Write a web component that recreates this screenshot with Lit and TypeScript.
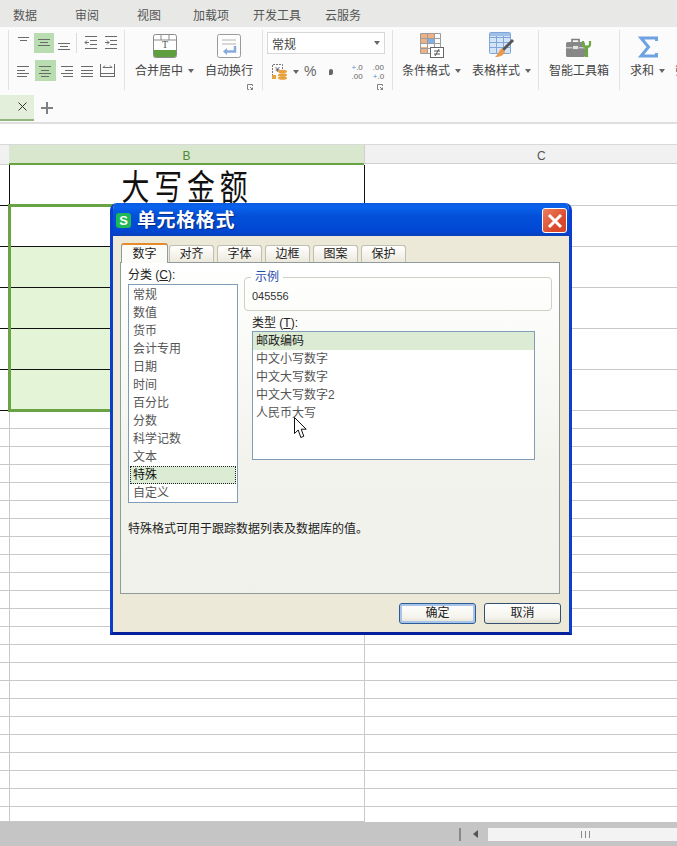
import { css, html, svg, LitElement } from "lit";
import { customElement } from "lit/decorators.js";
import { classMap } from "lit/directives/class-map.js";

type Seg = [number, number, number];

// simple "lines" icon used by the alignment buttons, 20x20
const lines = (segs: Seg[], extra: unknown = null) => html`<svg
  width="20"
  height="20"
  viewBox="0 0 20 20"
  fill="none"
  stroke="#6a6a6a"
  stroke-width="1"
>
  ${segs.map(([a, b, y]) => svg`<path d="M${a} ${y}H${b}" />`)} ${extra}
</svg>`;

const mergeIcon = html`<svg width="24" height="24" viewBox="0 0 24 24">
  <rect x=".5" y=".5" width="23" height="23" rx="2" fill="#fff" stroke="#8b8b8b" />
  <path d="M1 6H23M8 1V6M16 1V6" stroke="#8b8b8b" fill="none" />
  <path d="M1 16H23V21.5Q23 23 21.5 23H2.5Q1 23 1 21.5Z" fill="#5f9f40" />
  <text x="12" y="14" font-size="10" text-anchor="middle" fill="#555" font-family="Liberation Serif">T</text>
</svg>`;

const wrapIcon = html`<svg width="24" height="24" viewBox="0 0 24 24" fill="none">
  <rect x=".5" y=".5" width="23" height="23" rx="2" fill="#fdfdfd" stroke="#9a9a9a" />
  <path d="M5 6H19M5 10H19" stroke="#b4b4b4" />
  <path d="M18 12V17.5H9" stroke="#86a9de" stroke-width="2.4" />
  <path d="M10 14V21L6 17.5Z" fill="#86a9de" />
</svg>`;

const condIcon = html`<svg width="24" height="25" viewBox="0 0 24 25" fill="none">
  <rect x="7" y="1" width="7" height="5" fill="#eeb184" />
  <rect x="1" y="1" width="6" height="9" fill="#eeb184" />
  <rect x="7" y="6" width="8" height="5" fill="#7fb0e6" />
  <rect x="1" y="14" width="6" height="6" fill="#eeb184" />
  <path d="M.5 .5H20.5V14M.5 .5V20.5H10M7.5 1V20M14.5 1V14M1 5.5H20M1 10.5H20M1 15.5H10" stroke="#9c9c9c" />
  <rect x="10.5" y="14.5" width="13" height="10" fill="#fff" stroke="#666" />
  <path d="M14 18H20M14 21H20M19 16L15 23" stroke="#555" />
</svg>`;

const tableIcon = html`<svg width="26" height="26" viewBox="0 0 26 26" fill="none">
  <rect x=".5" y=".5" width="21" height="21" rx="1" fill="#d4e4f7" stroke="#7fa6d6" />
  <path d="M1 5.5H21M1 10.5H21M1 15.5H21M7.5 1V21M14.5 1V21" stroke="#7fa6d6" />
  <path d="M1 1H21V4H1Z" fill="#9fbfe6" />
  <path d="M24 8L13 19" stroke="#555" stroke-width="3" />
  <path d="M13 16L16 20C15 23 11 25 6 25C9 23 10 18 13 16Z" fill="#ea9a50" />
</svg>`;

const toolIcon = html`<svg width="26" height="20" viewBox="0 0 26 20" fill="none">
  <path d="M6 4V1.5H13V4" stroke="#7d7d7d" stroke-width="1.6" />
  <rect x="0" y="4" width="19" height="15" rx="1.5" fill="#878787" />
  <rect x="0" y="9" width="19" height="1.4" fill="#c9c9c9" />
  <rect x="6.5" y="7.5" width="6" height="4" fill="#e3e3e3" stroke="#777" stroke-width=".6" />
  <path d="M20.5 7.5V19" stroke="#6aa842" stroke-width="3.2" />
  <path d="M17 3V6.5Q17 9 20.5 9Q24 9 24 6.5V3" stroke="#6aa842" stroke-width="2.2" />
</svg>`;

const sigmaIcon = html`<svg width="20" height="22" viewBox="0 0 20 22" fill="none">
  <path d="M18.5 5V2H3L10.5 11L3 20H18.5V17" stroke="#6fa2e2" stroke-width="3" />
</svg>`;

const coinIcon = html`<svg width="17" height="17" viewBox="0 0 17 17" fill="none">
  <path d="M1.5 13V1.5H11.5V6" stroke="#777" stroke-dasharray="2 1" />
  <text x="6.5" y="9" font-size="8" text-anchor="middle" fill="#555" font-family="Liberation Sans">¥</text>
  <rect x="1" y="12" width="4" height="4" fill="#e9a13b" />
  <ellipse cx="11.5" cy="8.5" rx="4.5" ry="1.8" fill="#e9a13b" />
  <ellipse cx="11.5" cy="12" rx="4.5" ry="1.8" fill="#e9a13b" />
  <ellipse cx="11.5" cy="15" rx="4.5" ry="1.8" fill="#e9a13b" />
</svg>`;

const launcher = html`<svg class="launcher" width="6" height="6" viewBox="0 0 6 6" fill="none">
  <path d="M5.5 2V.5H.5V5.5H2M3 3L5.5 5.5M5.5 3.5V5.5H3.5" stroke="#808080" />
</svg>`;

const TOP_TABS = ["数据", "审阅", "视图", "加载项", "开发工具", "云服务"];
const CATEGORIES = [
  "常规",
  "数值",
  "货币",
  "会计专用",
  "日期",
  "时间",
  "百分比",
  "分数",
  "科学记数",
  "文本",
  "特殊",
  "自定义",
];
const TYPES = ["邮政编码", "中文小写数字", "中文大写数字", "中文大写数字2", "人民币大写"];
const DIALOG_TABS = ["数字", "对齐", "字体", "边框", "图案", "保护"];

// tall rows first, then the default height ones, the last is cut by the status bar
const ROW_HEIGHTS = [41, 41, 41, 41, 41, 41, ...Array(22).fill(18), 15];

@customElement("app-root")
class AppRoot extends LitElement {
  private bigButton(label: string, icon: unknown, caret = true) {
    return html`<div class="big">
      <div class="big-icon">${icon}</div>
      <div class="big-label">${label}${caret ? html`<i class="caret"></i>` : null}</div>
    </div>`;
  }

  private renderRibbon() {
    return html`<div class="ribbon">
      <div class="group g0"></div>
      <div class="group g1">
        <div class="icon-row">
          <span class="cell">${lines([[5, 16, 4.5], [7, 14, 7.5]])}</span>
          <span class="cell on top-on">${lines([[4, 16, 6.5], [6, 14, 9.5], [4, 16, 12.5]])}</span>
          <span class="cell">${lines([[4, 16, 10.5], [6, 14, 13.5], [4, 16, 16.5]])}</span>
          <span class="inner-sep"></span>
          <span class="cell">${lines(
            [[5, 17, 3.5], [10, 17, 7.5], [10, 17, 11.5], [5, 17, 15.5]],
            svg`<path d="M9 9.5H5M7 7.5L5 9.5L7 11.5" />`
          )}</span>
          <span class="cell">${lines(
            [[5, 17, 3.5], [10, 17, 7.5], [10, 17, 11.5], [5, 17, 15.5]],
            svg`<path d="M5 9.5H9M7 7.5L9 9.5L7 11.5" />`
          )}</span>
        </div>
        <div class="icon-row low">
          <span class="cell">${lines([[4, 16, 6.5], [4, 12, 10.5], [4, 16, 13.5], [4, 14, 16.5]])}</span>
          <span class="cell on wide">${lines([[4, 16, 6.5], [6, 14, 10.5], [4, 16, 13.5], [6, 14, 16.5]])}</span>
          <span class="cell">${lines([[4, 16, 6.5], [8, 16, 10.5], [4, 16, 13.5], [6, 16, 16.5]])}</span>
          <span class="cell">${lines([[4, 16, 6.5], [4, 16, 10.5], [4, 16, 13.5], [4, 16, 16.5]])}</span>
          <span class="cell">${lines(
            [[3, 18, 16.5], [3, 18, 13.5]],
            svg`<path d="M3.5 4V17M17.5 4V17M6 7.5H15M6 7.5L8 5.5M15 7.5L13 5.5" />`
          )}</span>
        </div>
      </div>
      <div class="group g2">
        ${this.bigButton("合并居中", mergeIcon)} ${this.bigButton("自动换行", wrapIcon, false)}
        ${launcher}
      </div>
      <div class="group g3">
        <div class="select">常规<i class="caret"></i></div>
        <div class="num-row">
          ${coinIcon}<i class="caret"></i>
          <span class="pct">%</span>
          <span class="comma"></span>
          <div class="dec first"><div><b>+</b>.0</div><div>.00</div></div>
          <div class="dec"><div>.00</div><div><b>+</b>.0</div></div>
        </div>
        ${launcher}
      </div>
      <div class="group g4">
        ${this.bigButton("条件格式", condIcon)} ${this.bigButton("表格样式", tableIcon)}
      </div>
      <div class="group g5">${this.bigButton("智能工具箱", toolIcon, false)}</div>
      <div class="group g6">
        ${this.bigButton("求和", sigmaIcon)} ${this.bigButton("筛选", null, false)}
      </div>
    </div>`;
  }

  private renderSheet() {
    return html`<div class="col-head">
        <div class="head-a"></div>
        <div class="head-b">B</div>
        <div class="head-c">C</div>
      </div>
      <div class="sheet">
        ${ROW_HEIGHTS.map(
          (h, i) => html`<div class="row" style="height:${h}px">
            <div class=${classMap({ a: true, inked: i < 6, first: i === 0 })}></div>
            <div
              class=${classMap({
                b: true,
                inked: i < 6,
                first: i === 0,
                filled: i > 1 && i < 6,
              })}
            >
              ${i === 0 ? html`<span class="big-title">大写金额</span>` : null}
            </div>
            <div class=${classMap({ c: true, cut: i === ROW_HEIGHTS.length - 1 })}></div>
          </div>`
        )}
        <div class="selection"></div>
      </div>`;
  }

  private renderDialog() {
    return html`<div class="dialog">
      <div class="titlebar">
        <span class="logo">S</span>
        <span class="title">单元格格式</span>
        <span class="close">
          <svg width="16" height="16" viewBox="0 0 16 16" fill="none">
            <path d="M2 2L14 14M14 2L2 14" stroke="#fff" stroke-width="3" />
          </svg>
        </span>
      </div>
      <div class="dlg-body">
        <div class="dlg-tabs">
          ${DIALOG_TABS.map(
            (t, i) => html`<div class=${classMap({ "dlg-tab": true, active: i === 0 })}>${t}</div>`
          )}
        </div>
        <div class="panel">
          <div class="panel-cols">
            <div class="left">
              <div class="label">分类 (<u>C</u>):</div>
              <div class="list cat-list">
                ${CATEGORIES.map(
                  (c) => html`<div class=${classMap({ item: true, focused: c === "特殊" })}>${c}</div>`
                )}
              </div>
            </div>
            <div class="right">
              <div class="sample">
                <span class="legend">示例</span>
                <span class="sample-value">045556</span>
              </div>
              <div class="type-wrap">
                <div class="label type-label">类型 (<u>T</u>):</div>
                <div class="list type-list">
                  ${TYPES.map(
                    (t, i) => html`<div class=${classMap({ item: true, picked: i === 0 })}>${t}</div>`
                  )}
                </div>
              </div>
            </div>
          </div>
          <div class="desc">特殊格式可用于跟踪数据列表及数据库的值。</div>
        </div>
        <div class="dlg-actions">
          <div class="btn default">确定</div>
          <div class="btn">取消</div>
        </div>
      </div>
    </div>`;
  }

  protected render() {
    return html`
      <div class="top-tabs">${TOP_TABS.map((t) => html`<span>${t}</span>`)}</div>
      ${this.renderRibbon()}
      <div class="doc-strip">
        <div class="doc-tab">
          <svg width="9" height="9" viewBox="0 0 9 9"><path d="M.5 .5L8.5 8.5M8.5 .5L.5 8.5" stroke="#333" /></svg>
        </div>
        <svg width="14" height="14" viewBox="0 0 14 14"><path d="M7 1V13M1 7H13" stroke="#808080" stroke-width="2" /></svg>
      </div>
      <div class="formula"></div>
      ${this.renderSheet()}
      <div class="status">
        <i class="st-sep"></i>
        <i class="st-arrow"></i>
        <div class="st-track"><i class="st-grip"></i></div>
      </div>
      ${this.renderDialog()}
      <svg class="pointer" width="13" height="22" viewBox="0 0 13 22">
        <path d="M.5 .5V16.5L4.2 13L6.8 20.5L9.8 19.3L7.2 12.2H12.2Z" fill="#fff" stroke="#111" />
      </svg>
    `;
  }

  static styles = css`
    :host {
      display: flex;
      flex-direction: column;
      position: relative;
      width: 677px;
      height: 846px;
      overflow: hidden;
      background: #fff;
      font-family: "Liberation Sans", "Noto Sans CJK SC", sans-serif;
      font-size: 12px;
      color: #444;
    }

    .top-tabs {
      display: grid;
      grid-template-columns: 62px 62px 56px 60px 72px auto;
      align-items: center;
      box-sizing: border-box;
      height: 27px;
      flex: none;
      padding: 2px 0 0 13px;
      background: #e8e9e7;
      color: #555;
    }

    .ribbon {
      display: flex;
      height: 67px;
      flex: none;
      overflow: hidden;
      background: #fbfbfb;
    }
    .group {
      display: flex;
      position: relative;
      flex: none;
      box-sizing: border-box;
      margin: 3px 0 4px;
      border-right: 1px solid #e2e2e2;
    }
    .g0 {
      width: 9px;
    }
    .g1 {
      flex-direction: column;
      width: 116px;
      padding: 3px 0 0 4px;
      gap: 7px;
    }
    .g2 {
      width: 138px;
      padding-left: 10px;
      gap: 11px;
    }
    .g3 {
      flex-direction: column;
      width: 130px;
      padding: 2px 0 0 4px;
    }
    .g4 {
      width: 146px;
      padding-left: 9px;
      gap: 11px;
    }
    .g5 {
      width: 81px;
      padding-left: 10px;
    }
    .g6 {
      width: 70px;
      padding-left: 10px;
      gap: 10px;
      border-right: 0;
    }
    .icon-row {
      display: flex;
      height: 20px;
    }
    .icon-row.low {
      height: 21px;
    }
    .cell {
      display: block;
      width: 20px;
      height: 20px;
      flex: none;
    }
    .cell.on {
      background: #b9dcb0;
    }
    .cell.top-on {
      margin-left: 1px;
    }
    .cell.wide {
      width: 21px;
      height: 21px;
      margin: 0 1px 0 2px;
    }
    .inner-sep {
      width: 1px;
      height: 20px;
      margin: 0 3px 0 2px;
      background: #dcdcdc;
    }
    .big {
      display: flex;
      flex-direction: column;
      align-items: center;
      flex: none;
    }
    .big-icon {
      display: flex;
      align-items: flex-end;
      justify-content: center;
      height: 28px;
    }
    .big-label {
      display: flex;
      align-items: center;
      margin-top: 6px;
      line-height: 14px;
      white-space: nowrap;
    }
    .caret {
      display: inline-block;
      width: 0;
      height: 0;
      margin-left: 5px;
      border: 3px solid transparent;
      border-top: 4px solid #666;
      border-bottom: 0;
    }
    .launcher {
      position: absolute;
      right: 9px;
      top: 54px;
    }
    .select {
      display: flex;
      align-items: center;
      justify-content: space-between;
      box-sizing: border-box;
      width: 118px;
      height: 22px;
      padding: 0 4px;
      border: 1px solid #d8d8d8;
      background: #fff;
    }
    .num-row {
      display: flex;
      align-items: center;
      height: 17px;
      margin: 9px 0 0 4px;
    }
    .pct {
      margin-left: 5px;
      font-size: 14px;
      line-height: 17px;
      color: #666;
    }
    .comma {
      width: 4px;
      height: 6px;
      margin: 0 0 0 13px;
      border-radius: 2px 2px 2px 0;
      background: #666;
    }
    .dec {
      display: flex;
      flex-direction: column;
      gap: 0;
      margin-left: 10px;
      font-size: 8px;
      color: #666;
    }
    .dec.first {
      margin-left: 18px;
    }
    .dec div {
      height: 9px;
      line-height: 9px;
      white-space: nowrap;
    }
    .dec b {
      font-weight: 400;
      color: #5b8fd6;
    }

    .doc-strip {
      display: flex;
      align-items: center;
      gap: 6px;
      box-sizing: border-box;
      height: 30px;
      flex: none;
      padding-bottom: 1px;
      background: #fbfbfb;
      border-bottom: 2px solid #dfdfdf;
    }
    .doc-tab {
      display: flex;
      align-items: center;
      justify-content: flex-end;
      box-sizing: border-box;
      width: 34px;
      height: 26px;
      padding: 0 7px 0 0;
      background: #e3efda;
      border-bottom: 2px solid #8fb87a;
    }
    .formula {
      height: 21px;
      flex: none;
      box-sizing: border-box;
      background: #fff;
      border-bottom: 1px solid #d9d9d9;
    }

    .col-head {
      display: flex;
      height: 20px;
      flex: none;
      line-height: 23px;
      text-align: center;
    }
    .head-a {
      width: 9px;
      background: #f1f1f1;
      border-bottom: 1px solid #cfcfcf;
    }
    .head-b {
      width: 355px;
      box-sizing: border-box;
      color: #4f8a2f;
      background: #d8e7ce;
      border-bottom: 2px solid #6aa343;
    }
    .head-c {
      flex: 1;
      box-sizing: border-box;
      height: 19px;
      padding-left: 172px;
      text-align: left;
      color: #555;
      background: #f1f1f1;
      border-bottom: 1px solid #cfcfcf;
      border-left: 1px solid #cfcfcf;
    }

    .sheet {
      position: relative;
      flex: 1;
      overflow: hidden;
      background: #fff;
    }
    .row {
      display: flex;
      box-sizing: border-box;
    }
    .a,
    .b,
    .c {
      box-sizing: border-box;
      border-bottom: 1px solid #c9c9c9;
    }
    .a {
      width: 10px;
      border-right: 1px solid #c9c9c9;
    }
    .b {
      display: flex;
      justify-content: center;
      width: 355px;
      border-right: 1px solid #c9c9c9;
    }
    .c {
      flex: 1;
    }
    .c.cut {
      border-bottom: 0;
    }
    .inked {
      border-bottom-color: #111;
    }
    .first {
      border-right-color: #111;
    }
    .filled {
      background: #e3f5d6;
    }
    .big-title {
      display: inline-block;
      font-size: 34px;
      line-height: 44px;
      height: 40px;
      letter-spacing: 6px;
      color: #111;
      transform: scale(0.82, 1.05);
    }
    .selection {
      position: absolute;
      left: 8px;
      top: 39px;
      box-sizing: border-box;
      width: 358px;
      height: 208px;
      border: 3px solid #6aa343;
    }

    .status {
      display: flex;
      align-items: center;
      height: 24px;
      flex: none;
      padding-left: 459px;
      background: #c5c5c5;
    }
    .st-sep {
      width: 2px;
      height: 13px;
      background: #8a8a8a;
    }
    .st-arrow {
      width: 0;
      height: 0;
      margin: 0 10px 0 12px;
      border: 4px solid transparent;
      border-right: 5px solid #555;
      border-left: 0;
    }
    .st-track {
      display: flex;
      align-items: center;
      flex: 1;
      height: 13px;
      padding-left: 93px;
      background: #f3f3f3;
    }
    .st-grip {
      width: 9px;
      height: 7px;
      background: repeating-linear-gradient(90deg, #8a8a8a 0 1px, transparent 1px 4px);
    }

    .dialog {
      position: absolute;
      left: 110px;
      top: 203px;
      box-sizing: border-box;
      width: 462px;
      height: 432px;
      overflow: hidden;
      background: #ece9d8;
      border: 3px solid #0b3fcb;
      border-top: 0;
      border-bottom-color: #04219b;
      border-radius: 7px 7px 0 0;
    }
    .titlebar {
      display: flex;
      align-items: center;
      box-sizing: border-box;
      height: 33px;
      margin: 0 -3px;
      padding: 2px 5px 0 6px;
      background: linear-gradient(#0a5ae2 0, #0a62ec 12%, #0350d8 40%, #0047d4 85%, #0a3fb8 100%);
    }
    .logo {
      width: 15px;
      height: 15px;
      border-radius: 3px;
      text-align: center;
      font-size: 13px;
      font-weight: 700;
      line-height: 15px;
      color: #fff;
      background: #1db954;
    }
    .title {
      flex: 1;
      margin-left: 6px;
      font-size: 19px;
      font-weight: 700;
      line-height: 24px;
      letter-spacing: 0.6px;
      color: #fff;
      text-shadow: 1px 1px 1px #0a2a80;
    }
    .close {
      display: flex;
      align-items: center;
      justify-content: center;
      box-sizing: border-box;
      width: 25px;
      height: 25px;
      border: 1px solid #fff;
      border-radius: 3px;
      background: linear-gradient(135deg, #ec7d5c, #d9482a 70%);
    }
    .dlg-body {
      display: flex;
      flex-direction: column;
      height: 396px;
      box-sizing: border-box;
      padding: 7px 8px 8px 7px;
    }
    .dlg-tabs {
      display: flex;
      gap: 3px;
      height: 19px;
      flex: none;
      position: relative;
    }
    .dlg-tab {
      box-sizing: border-box;
      width: 45px;
      height: 17px;
      margin-top: 2px;
      text-align: center;
      line-height: 17px;
      color: #222;
      border: 1px solid #bfbfb2;
      border-bottom: 0;
      border-radius: 3px 3px 0 0;
      background: linear-gradient(#fff, #ece9dc);
    }
    .dlg-tab.active {
      width: 47px;
      height: 20px;
      margin: 0 -2px 0 1px;
      line-height: 19px;
      background: #fbfbf8;
      border-color: #919b9c;
      border-top: 2px solid #e68b2c;
      position: relative;
    }
    .panel {
      box-sizing: border-box;
      height: 332px;
      flex: none;
      margin-right: 1px;
      padding: 5px 7px 0;
      border: 1px solid #919b9c;
      background: linear-gradient(#fff 0, #fcfcfa 15%, #f3f3ee 60%, #f1f1ec 100%);
    }
    .panel-cols {
      display: grid;
      grid-template-columns: 110px 308px;
      gap: 6px;
    }
    .label {
      height: 16px;
      line-height: 15px;
      color: #222;
      white-space: nowrap;
    }
    .type-label {
      height: 15px;
    }
    .list {
      box-sizing: border-box;
      border: 1px solid #7f9db9;
      background: #fff;
    }
    .cat-list {
      width: 110px;
      height: 219px;
      padding: 1px;
    }
    .item {
      box-sizing: border-box;
      height: 18px;
      padding-left: 3px;
      line-height: 18px;
      color: #555;
    }
    .focused {
      padding-left: 2px;
      color: #111;
      line-height: 16px;
      background: #dcebd3;
      border: 1px dotted #222;
    }
    .sample {
      position: relative;
      box-sizing: border-box;
      height: 34px;
      margin-top: 9px;
      padding: 10px 0 0 7px;
      border: 1px solid #d0d0c8;
      border-radius: 4px;
    }
    .legend {
      position: absolute;
      left: 6px;
      top: -9px;
      padding: 0 4px;
      line-height: 16px;
      color: #1f4fb0;
      background: #fefefd;
    }
    .sample-value {
      font-size: 11px;
      line-height: 16px;
      color: #333;
    }
    .type-wrap {
      margin: 5px 0 0 8px;
    }
    .type-list {
      width: 283px;
      height: 129px;
    }
    .picked {
      color: #222;
      background: #dcebd3;
    }
    .desc {
      margin-top: 19px;
      line-height: 14px;
      color: #222;
    }
    .dlg-actions {
      display: flex;
      justify-content: flex-end;
      gap: 8px;
      margin-top: 9px;
    }
    .btn {
      box-sizing: border-box;
      width: 77px;
      height: 21px;
      text-align: center;
      line-height: 19px;
      color: #222;
      border: 1px solid #34506e;
      border-radius: 3px;
      background: linear-gradient(#fff, #f4f3ec 70%, #e3e0d2);
    }
    .btn.default {
      border-color: #2a5c94;
      box-shadow: inset 0 0 0 2px #a9c3ea;
    }

    .pointer {
      position: absolute;
      left: 294px;
      top: 417px;
    }
  `;
}

declare global {
  interface HTMLElementTagNameMap {
    "app-root": AppRoot;
  }
}
